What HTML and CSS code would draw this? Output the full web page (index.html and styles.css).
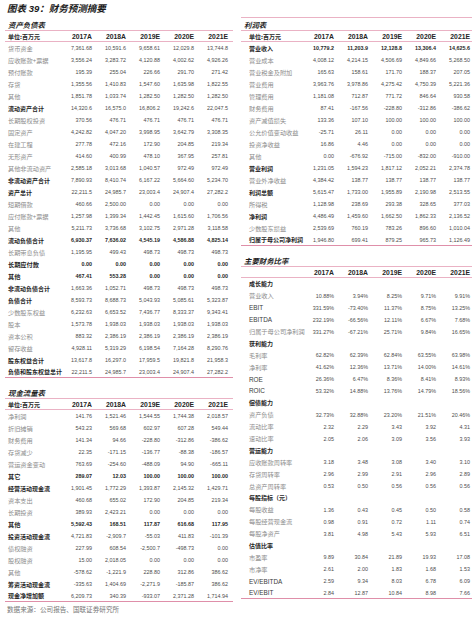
FILE: index.html
```html
<!DOCTYPE html>
<html lang="zh-CN">
<head>
<meta charset="utf-8">
<title>财务预测摘要</title>
<link rel="stylesheet" href="styles.css">
</head>
<body>
<div class="fig-title">图表 39：财务预测摘要</div>
<div class="cols">
  <div class="col">
    <section class="tbl left first">
      <div class="sec-title">资产负债表</div>
      <div class="row head"><span class="lab">单位:百万元</span><span>2017A</span><span>2018A</span><span>2019E</span><span>2020E</span><span>2021E</span></div>
      <div class="row"><span class="lab">货币资金</span><span>7,361.68</span><span>10,591.6</span><span>9,658.61</span><span>12,029.8</span><span>13,744.8</span></div>
      <div class="row"><span class="lab">应收账款+票据</span><span>3,556.24</span><span>3,283.72</span><span>4,120.88</span><span>4,002.62</span><span>4,926.26</span></div>
      <div class="row"><span class="lab">预付账款</span><span>195.39</span><span>255.04</span><span>226.66</span><span>291.70</span><span>271.42</span></div>
      <div class="row"><span class="lab">存货</span><span>1,355.56</span><span>1,410.83</span><span>1,547.60</span><span>1,635.98</span><span>1,822.55</span></div>
      <div class="row"><span class="lab">其他</span><span>1,851.78</span><span>1,033.74</span><span>1,282.50</span><span>1,282.50</span><span>1,282.50</span></div>
      <div class="row b"><span class="lab">流动资产合计</span><span>14,320.6</span><span>16,575.0</span><span>16,806.2</span><span>19,242.6</span><span>22,047.5</span></div>
      <div class="row"><span class="lab">长期股权投资</span><span>370.56</span><span>476.71</span><span>476.71</span><span>476.71</span><span>476.71</span></div>
      <div class="row"><span class="lab">固定资产</span><span>4,242.82</span><span>4,047.20</span><span>3,998.95</span><span>3,642.79</span><span>3,308.35</span></div>
      <div class="row"><span class="lab">在建工程</span><span>277.78</span><span>472.16</span><span>172.90</span><span>204.85</span><span>219.34</span></div>
      <div class="row"><span class="lab">无形资产</span><span>414.60</span><span>400.99</span><span>478.10</span><span>367.95</span><span>257.81</span></div>
      <div class="row"><span class="lab">其他非流动资产</span><span>2,585.18</span><span>3,013.68</span><span>1,040.57</span><span>972.49</span><span>972.49</span></div>
      <div class="row b"><span class="lab">非流动资产合计</span><span>7,890.93</span><span>8,410.74</span><span>6,167.22</span><span>5,664.60</span><span>5,234.70</span></div>
      <div class="row b"><span class="lab">资产总计</span><span>22,211.5</span><span>24,985.7</span><span>23,003.4</span><span>24,907.4</span><span>27,282.2</span></div>
      <div class="row"><span class="lab">短期借款</span><span>460.66</span><span>2,500.00</span><span>0.00</span><span>0.00</span><span>0.00</span></div>
      <div class="row"><span class="lab">应付账款+票据</span><span>1,257.98</span><span>1,399.34</span><span>1,442.45</span><span>1,615.60</span><span>1,706.56</span></div>
      <div class="row"><span class="lab">其他</span><span>5,211.73</span><span>3,736.68</span><span>3,102.75</span><span>2,971.28</span><span>3,118.58</span></div>
      <div class="row b bn"><span class="lab">流动负债合计</span><span>6,930.37</span><span>7,636.02</span><span>4,545.19</span><span>4,586.88</span><span>4,825.14</span></div>
      <div class="row"><span class="lab">长期带息负债</span><span>1,195.95</span><span>499.43</span><span>498.73</span><span>498.73</span><span>498.73</span></div>
      <div class="row bn"><span class="lab">长期应付款</span><span>0.00</span><span>0.00</span><span>0.00</span><span>0.00</span><span>0.00</span></div>
      <div class="row bn"><span class="lab">其他</span><span>467.41</span><span>553.28</span><span>0.00</span><span>0.00</span><span>0.00</span></div>
      <div class="row b"><span class="lab">非流动负债合计</span><span>1,663.36</span><span>1,052.71</span><span>498.73</span><span>498.73</span><span>498.73</span></div>
      <div class="row b"><span class="lab">负债合计</span><span>8,593.73</span><span>8,688.73</span><span>5,043.93</span><span>5,085.61</span><span>5,323.87</span></div>
      <div class="row"><span class="lab">少数股东权益</span><span>6,232.63</span><span>6,653.52</span><span>7,436.77</span><span>8,333.37</span><span>9,343.41</span></div>
      <div class="row"><span class="lab">股本</span><span>1,573.78</span><span>1,938.03</span><span>1,938.03</span><span>1,938.03</span><span>1,938.03</span></div>
      <div class="row"><span class="lab">资本公积</span><span>883.32</span><span>2,386.19</span><span>2,386.19</span><span>2,386.19</span><span>2,386.19</span></div>
      <div class="row"><span class="lab">留存收益</span><span>4,928.11</span><span>5,319.29</span><span>6,198.54</span><span>7,164.28</span><span>8,290.76</span></div>
      <div class="row b"><span class="lab">股东权益合计</span><span>13,617.8</span><span>16,297.0</span><span>17,959.5</span><span>19,821.8</span><span>21,958.3</span></div>
      <div class="row b last"><span class="lab">负债和股东权益总计</span><span>22,211.5</span><span>24,985.7</span><span>23,003.4</span><span>24,907.4</span><span>27,282.2</span></div>
    </section>

    <section class="tbl left next">
      <div class="sec-title">现金流量表</div>
      <div class="row head"><span class="lab">单位:百万元</span><span>2017A</span><span>2018A</span><span>2019E</span><span>2020E</span><span>2021E</span></div>
      <div class="row"><span class="lab">净利润</span><span>141.76</span><span>1,521.46</span><span>1,544.55</span><span>1,744.38</span><span>2,018.57</span></div>
      <div class="row"><span class="lab">折旧摊销</span><span>543.23</span><span>569.68</span><span>602.97</span><span>607.28</span><span>549.44</span></div>
      <div class="row"><span class="lab">财务费用</span><span>141.34</span><span>94.66</span><span>-228.80</span><span>-312.86</span><span>-386.62</span></div>
      <div class="row"><span class="lab">存货减少</span><span>22.35</span><span>-171.15</span><span>-136.77</span><span>-88.38</span><span>-186.57</span></div>
      <div class="row"><span class="lab">营运资金变动</span><span>763.69</span><span>-254.60</span><span>-488.09</span><span>94.90</span><span>-665.11</span></div>
      <div class="row bn"><span class="lab">其它</span><span>289.07</span><span>12.03</span><span>100.00</span><span>100.00</span><span>100.00</span></div>
      <div class="row b"><span class="lab">经营活动现金流</span><span>1,901.45</span><span>1,772.29</span><span>1,393.87</span><span>2,145.32</span><span>1,429.71</span></div>
      <div class="row"><span class="lab">资本支出</span><span>460.68</span><span>655.02</span><span>172.90</span><span>204.85</span><span>219.34</span></div>
      <div class="row"><span class="lab">长期投资</span><span>389.93</span><span>2,423.21</span><span>0.00</span><span>0.00</span><span>0.00</span></div>
      <div class="row bn"><span class="lab">其他</span><span>5,592.43</span><span>168.51</span><span>117.87</span><span>616.68</span><span>117.95</span></div>
      <div class="row b"><span class="lab">投资活动现金流</span><span>4,721.83</span><span>-2,909.7</span><span>-55.03</span><span>411.83</span><span>-101.39</span></div>
      <div class="row"><span class="lab">债权融资</span><span>227.99</span><span>608.54</span><span>-2,500.7</span><span>-498.73</span><span>0.00</span></div>
      <div class="row"><span class="lab">股权融资</span><span>15.00</span><span>2,018.05</span><span>0.00</span><span>0.00</span><span>0.00</span></div>
      <div class="row"><span class="lab">其他</span><span>-578.62</span><span>-1,221.9</span><span>228.80</span><span>312.86</span><span>386.62</span></div>
      <div class="row b"><span class="lab">筹资活动现金流</span><span>-335.63</span><span>1,404.69</span><span>-2,271.9</span><span>-185.87</span><span>386.62</span></div>
      <div class="row b last"><span class="lab">现金净增加额</span><span>6,209.73</span><span>340.39</span><span>-933.07</span><span>2,371.28</span><span>1,714.94</span></div>
    </section>
    <div class="source">数据来源：公司报告、国联证券研究所</div>
  </div>

  <div class="col">
    <section class="tbl right first topline">
      <div class="sec-title">利润表</div>
      <div class="row head"><span class="lab">单位:百万元</span><span>2017A</span><span>2018A</span><span>2019E</span><span>2020E</span><span>2021E</span></div>
      <div class="row b bn"><span class="lab">营业收入</span><span>10,779.2</span><span>11,203.9</span><span>12,128.8</span><span>13,306.4</span><span>14,625.6</span></div>
      <div class="row"><span class="lab">营业成本</span><span>4,008.12</span><span>4,214.15</span><span>4,506.69</span><span>4,849.66</span><span>5,268.50</span></div>
      <div class="row"><span class="lab">营业税金及附加</span><span>165.63</span><span>158.61</span><span>171.70</span><span>188.37</span><span>207.05</span></div>
      <div class="row"><span class="lab">营业费用</span><span>3,963.76</span><span>3,978.86</span><span>4,275.42</span><span>4,750.39</span><span>5,221.36</span></div>
      <div class="row"><span class="lab">管理费用</span><span>1,181.08</span><span>712.87</span><span>771.72</span><span>846.64</span><span>930.58</span></div>
      <div class="row"><span class="lab">财务费用</span><span>87.41</span><span>-167.56</span><span>-228.80</span><span>-312.86</span><span>-386.62</span></div>
      <div class="row"><span class="lab">资产减值损失</span><span>133.36</span><span>107.10</span><span>100.00</span><span>100.00</span><span>100.00</span></div>
      <div class="row"><span class="lab">公允价值变动收益</span><span>-25.71</span><span>26.11</span><span>0.00</span><span>0.00</span><span>0.00</span></div>
      <div class="row"><span class="lab">投资净收益</span><span>16.86</span><span>4.46</span><span>0.00</span><span>0.00</span><span>0.00</span></div>
      <div class="row"><span class="lab">其他</span><span>0.00</span><span>-676.92</span><span>-715.00</span><span>-832.00</span><span>-910.00</span></div>
      <div class="row b"><span class="lab">营业利润</span><span>1,231.05</span><span>1,594.23</span><span>1,817.12</span><span>2,052.21</span><span>2,374.78</span></div>
      <div class="row"><span class="lab">营业外净收益</span><span>4,384.42</span><span>138.77</span><span>138.77</span><span>138.77</span><span>138.77</span></div>
      <div class="row b"><span class="lab">利润总额</span><span>5,615.47</span><span>1,733.00</span><span>1,955.89</span><span>2,190.98</span><span>2,513.55</span></div>
      <div class="row"><span class="lab">所得税</span><span>1,128.98</span><span>238.69</span><span>293.38</span><span>328.65</span><span>377.03</span></div>
      <div class="row b"><span class="lab">净利润</span><span>4,486.49</span><span>1,459.60</span><span>1,662.50</span><span>1,862.33</span><span>2,136.52</span></div>
      <div class="row"><span class="lab">少数股东损益</span><span>2,539.69</span><span>760.19</span><span>783.26</span><span>896.60</span><span>1,010.04</span></div>
      <div class="row b last"><span class="lab">归属于母公司净利润</span><span>1,946.80</span><span>699.41</span><span>879.25</span><span>965.73</span><span>1,126.49</span></div>
    </section>

    <section class="tbl right next ratios">
      <div class="sec-title">主要财务比率</div>
      <div class="row head"><span class="lab"></span><span>2017A</span><span>2018A</span><span>2019E</span><span>2020E</span><span>2021E</span></div>
      <div class="row b"><span class="lab">成长能力</span><span></span><span></span><span></span><span></span><span></span></div>
      <div class="row"><span class="lab">营业收入</span><span>10.88%</span><span>3.94%</span><span>8.25%</span><span>9.71%</span><span>9.91%</span></div>
      <div class="row"><span class="lab en">EBIT</span><span>331.59%</span><span>-73.40%</span><span>11.37%</span><span>8.75%</span><span>13.25%</span></div>
      <div class="row"><span class="lab en">EBITDA</span><span>232.19%</span><span>-66.56%</span><span>12.11%</span><span>6.67%</span><span>7.68%</span></div>
      <div class="row"><span class="lab">归属于母公司净利润</span><span>331.27%</span><span>-67.21%</span><span>25.71%</span><span>9.84%</span><span>16.65%</span></div>
      <div class="row b"><span class="lab">获利能力</span><span></span><span></span><span></span><span></span><span></span></div>
      <div class="row"><span class="lab">毛利率</span><span>62.82%</span><span>62.39%</span><span>62.84%</span><span>63.55%</span><span>63.98%</span></div>
      <div class="row"><span class="lab">净利率</span><span>41.62%</span><span>12.36%</span><span>13.71%</span><span>14.00%</span><span>14.61%</span></div>
      <div class="row"><span class="lab en">ROE</span><span>26.36%</span><span>6.47%</span><span>8.36%</span><span>8.41%</span><span>8.93%</span></div>
      <div class="row"><span class="lab en">ROIC</span><span>53.32%</span><span>14.88%</span><span>13.76%</span><span>14.79%</span><span>18.56%</span></div>
      <div class="row b"><span class="lab">偿债能力</span><span></span><span></span><span></span><span></span><span></span></div>
      <div class="row"><span class="lab">资产负债</span><span>32.73%</span><span>32.88%</span><span>23.20%</span><span>21.51%</span><span>20.46%</span></div>
      <div class="row"><span class="lab">流动比率</span><span>2.32</span><span>2.29</span><span>3.43</span><span>3.92</span><span>4.31</span></div>
      <div class="row"><span class="lab">速动比率</span><span>2.05</span><span>2.06</span><span>3.09</span><span>3.56</span><span>3.93</span></div>
      <div class="row b"><span class="lab">营运能力</span><span></span><span></span><span></span><span></span><span></span></div>
      <div class="row"><span class="lab">应收账款周转率</span><span>3.18</span><span>3.48</span><span>3.08</span><span>3.40</span><span>3.10</span></div>
      <div class="row"><span class="lab">存货周转率</span><span>2.96</span><span>2.99</span><span>2.91</span><span>2.96</span><span>2.89</span></div>
      <div class="row"><span class="lab">总资产周转率</span><span>0.53</span><span>0.50</span><span>0.56</span><span>0.56</span><span>0.56</span></div>
      <div class="row b"><span class="lab">每股指标（元）</span><span></span><span></span><span></span><span></span><span></span></div>
      <div class="row"><span class="lab">每股收益</span><span>1.36</span><span>0.43</span><span>0.45</span><span>0.50</span><span>0.58</span></div>
      <div class="row"><span class="lab">每股经营现金流</span><span>0.98</span><span>0.91</span><span>0.72</span><span>1.11</span><span>0.74</span></div>
      <div class="row"><span class="lab">每股净资产</span><span>3.81</span><span>4.98</span><span>5.43</span><span>5.93</span><span>6.51</span></div>
      <div class="row b"><span class="lab">估值比率</span><span></span><span></span><span></span><span></span><span></span></div>
      <div class="row"><span class="lab">市盈率</span><span>9.89</span><span>30.84</span><span>21.89</span><span>19.93</span><span>17.08</span></div>
      <div class="row"><span class="lab">市净率</span><span>2.61</span><span>2.00</span><span>1.83</span><span>1.68</span><span>1.53</span></div>
      <div class="row"><span class="lab en">EV/EBITDA</span><span>2.59</span><span>9.34</span><span>8.03</span><span>6.78</span><span>6.09</span></div>
      <div class="row last"><span class="lab en">EV/EBIT</span><span>2.84</span><span>12.87</span><span>10.84</span><span>8.98</span><span>7.66</span></div>
    </section>
  </div>
</div>
</body>
</html>
```

FILE: styles.css
```css
* {
  box-sizing: border-box;
  margin: 0;
  padding: 0;
}

html, body {
  background: #ffffff;
}

body {
  width: 474px;
  height: 621px;
  overflow: hidden;
  font-family: "Liberation Sans", "Noto Sans CJK SC", sans-serif;
  color: #444;
}

.fig-title {
  height: 18px;
  padding-left: 7px;
  font-family: "Liberation Sans", "Noto Sans CJK SC", sans-serif;
  font-size: 9.5px;
  line-height: 17px;
  font-weight: bold;
  font-style: italic;
  color: #1a1a1a;
}

.cols {
  display: grid;
  grid-template-columns: 228px 231px;
  column-gap: 8px;
  padding-left: 5px;
  align-items: start;
}

.col {
  display: flex;
  flex-direction: column;
}

.tbl {
  display: flex;
  flex-direction: column;
}

.tbl.topline {
  margin-top: -1px;
  border-top: 1px solid #eab2c4;
}

.tbl.next {
  margin-top: 9px;
}

.sec-title {
  height: 13px;
  line-height: 13px;
  padding-left: 3px;
  font-family: "Noto Sans CJK SC", sans-serif;
  font-size: 7.4px;
  font-weight: bold;
  font-style: italic;
  color: #1f1f1f;
  border-bottom: 1px solid #eab2c4;
}

.tbl.next .sec-title {
  height: 12px;
  line-height: 12px;
}

.row {
  display: grid;
  grid-template-columns: 58px repeat(5, 34px);
  height: 12px;
  align-items: center;
}

.right .row {
  grid-template-columns: 61px repeat(5, 34px);
}

.ratios .row {
  height: 11.9px;
}

.row > span {
  text-align: right;
  padding-right: 5px;
  font-size: 5.4px;
  white-space: nowrap;
  color: #4d4d4d;
}

.right .row > span {
  padding-right: 2px;
}

.row > .lab {
  text-align: left;
  padding-left: 3px;
  padding-right: 0;
  font-family: "Noto Sans CJK SC", sans-serif;
  font-size: 6.2px;
  color: #8c8c8c;
  overflow: visible;
}

.right .row > .lab {
  padding-left: 8px;
  padding-right: 0;
}

.row > .lab.en {
  font-family: "Liberation Sans", sans-serif;
  font-size: 6.4px;
  color: #3a3a3a;
}

.row.b > .lab {
  font-weight: bold;
  font-size: 6px;
  color: #1f1f1f;
}

.row.bn > span {
  font-weight: bold;
  color: #1f1f1f;
}

.row.head {
  height: 11px;
  border-bottom: 1px solid #eab2c4;
}

.row.head > span {
  font-size: 6.8px;
  font-weight: bold;
  color: #262626;
}

.row.head > .lab {
  font-size: 6px;
  color: #262626;
}

.row.last {
  border-bottom: 1.5px solid #df8fa9;
}

.source {
  height: 14px;
  line-height: 14px;
  padding-left: 2px;
  font-family: "Noto Sans CJK SC", sans-serif;
  font-size: 6.6px;
  color: #777;
}
```
